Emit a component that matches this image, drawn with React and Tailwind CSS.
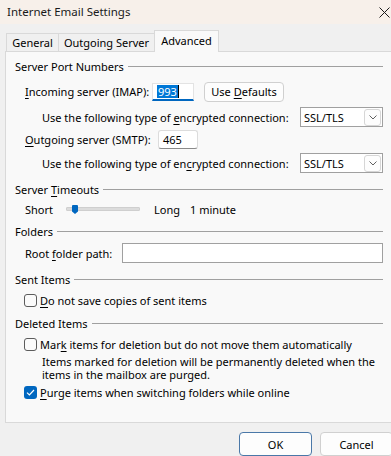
function U({ children }) {
  return <span className="underline decoration-1 underline-offset-[2px]">{children}</span>;
}

function GroupHeader({ children, className = '' }) {
  return (
    <div className={`flex items-center h-[16px] ${className}`}>
      <span>{children}</span>
      <div className="ml-[4px] mt-[1px] h-px flex-1 bg-[#a0a0a0]" />
    </div>
  );
}

function Checkbox({ checked }) {
  if (checked) {
    return (
      <div className="flex size-[13px] shrink-0 items-center justify-center rounded-[3px] bg-[#0067c0]">
        <svg width="9" height="7" viewBox="0 0 9 7" fill="none">
          <path d="M1 3.6 L3.4 6 L8 1" stroke="#fff" strokeWidth="1.2" />
        </svg>
      </div>
    );
  }
  return <div className="size-[13px] shrink-0 rounded-[3px] border border-[#5c5c5c] bg-[#fbfbfb]" />;
}

function Select({ value }) {
  return (
    <div className="flex h-[20px] w-[83px] shrink-0 items-center justify-between border border-[#a0a0a0] bg-white pl-[3px] pr-px">
      <span>{value}</span>
      <div className="flex h-[17px] w-[17px] items-center justify-center rounded-[3px] border border-[#d6d6d6] bg-[#fdfdfd]">
        <svg width="8" height="5" viewBox="0 0 8 5" fill="none">
          <path d="M0.5 0.5 L4 4 L7.5 0.5" stroke="#606060" strokeWidth="1" />
        </svg>
      </div>
    </div>
  );
}

export default function App() {
  return (
    <div className="flex h-[456px] w-[391px] flex-col overflow-hidden whitespace-nowrap bg-[#f0f0f0] font-['Noto_Sans',sans-serif] text-[11px] leading-none text-black">
      <div className="flex h-[24px] shrink-0 items-center justify-between bg-[#f7f0ea] pl-[7px] pr-px text-[#1a1a1a]">
        <span className="text-[11.5px]">Internet Email Settings</span>
        <svg width="11" height="11" viewBox="0 0 11 11" fill="none">
          <path d="M0.5 0.5 L10.5 10.5 M10.5 0.5 L0.5 10.5" stroke="#1a1a1a" strokeWidth="1" />
        </svg>
      </div>

      <div className="flex h-[27px] shrink-0 items-end pl-[6px]">
        <div className="flex h-[18px] w-[52px] items-center justify-center border-l border-t border-[#d9d9d9]">General</div>
        <div className="flex h-[18px] w-[96px] items-center justify-center border-l border-t border-[#d9d9d9]">Outgoing Server</div>
        <div className="relative z-10 -mb-px flex h-[22px] w-[65px] items-center justify-center border-x border-t border-[#d9d9d9] bg-[#f9f9f9] pb-[2px]">Advanced</div>
      </div>

      <div className="ml-[5px] flex h-[372px] shrink-0 flex-col border-y border-l border-[#d9d9d9] bg-[#f9f9f9] pl-[9px] pr-[8px]">
        <GroupHeader className="mt-[6px]">Server Port Numbers</GroupHeader>

        <div className="mt-[7px] flex h-[21px] items-center pl-[10px]">
          <span className="w-[127px]"><U>I</U>ncoming server (IMAP):</span>
          <div className="flex h-[18px] w-[42px] items-center border-x border-t border-b-2 border-[#e3e3e3] border-b-[#0067c0] bg-white pl-[4px]">
            <span className="bg-[#0078d7] px-px py-[1px] text-white">993</span>
            <span className="h-[13px] w-px bg-black" />
          </div>
          <div className="ml-[10px] flex h-[20px] w-[80px] items-center justify-center rounded-[4px] border border-[#d0d0d0] bg-[#fdfdfd]">
            Use <span className="ml-[3px]"><U>D</U>efaults</span>
          </div>
        </div>

        <div className="mt-[5px] flex h-[20px] items-center justify-between pl-[27px]">
          <span>Use the following type of <U>e</U>ncrypted connection:</span>
          <Select value="SSL/TLS" />
        </div>

        <div className="mt-[3px] flex h-[19px] items-center pl-[10px]">
          <span className="w-[133px]"><U>O</U>utgoing server (SMTP):</span>
          <div className="flex h-[19px] w-[40px] items-center rounded-[3px] border border-[#dcdcdc] border-b-[#8a8a8a] bg-white pl-[4px]">465</div>
        </div>

        <div className="mt-[4px] flex h-[20px] items-center justify-between pl-[27px]">
          <span>Use the following type of en<U>c</U>rypted connection:</span>
          <Select value="SSL/TLS" />
        </div>

        <GroupHeader className="mt-[8px]">Server <U>T</U>imeouts</GroupHeader>

        <div className="mt-[4px] flex h-[16px] items-center pl-[10px]">
          <span className="w-[41px]">Short</span>
          <div className="relative h-[4px] w-[74px] rounded-[1px] border border-[#cfcfcf] bg-[#dcdcdc]">
            <svg className="absolute -top-[3px] left-[5px]" width="6" height="9" viewBox="0 0 6 9">
              <path d="M0 1 Q0 0 1 0 L5 0 Q6 0 6 1 L6 6.5 L3 9 L0 6.5 Z" fill="#0067c0" />
            </svg>
          </div>
          <span className="ml-[14px] w-[36px]">Long</span>
          <span>1 minute</span>
        </div>

        <GroupHeader className="mt-[6px]">Folders</GroupHeader>

        <div className="mt-[4px] flex h-[20px] items-center pl-[10px]">
          <span className="w-[97px]">Root <U>f</U>older path:</span>
          <div className="h-[20px] flex-1 border border-[#a0a0a0] bg-white" />
        </div>

        <GroupHeader className="mt-[8px]">Sent Items</GroupHeader>

        <div className="mt-[5px] flex h-[16px] items-center gap-[3px] pl-[9px]">
          <Checkbox />
          <span><U>D</U>o not save copies of sent items</span>
        </div>

        <GroupHeader className="mt-[7px]">Deleted Items</GroupHeader>

        <div className="mt-[5px] flex h-[16px] items-center gap-[3px] pl-[9px]">
          <Checkbox />
          <span>Mar<U>k</U> items for deletion but do not move them automatically</span>
        </div>

        <div className="mt-[3px] pl-[27px] leading-[13px]">
          <div>Items marked for deletion will be permanently deleted when the</div>
          <div>items in the mailbox are purged.</div>
        </div>

        <div className="mt-[3px] flex h-[16px] items-center gap-[3px] pl-[9px]">
          <Checkbox checked />
          <span><U>P</U>urge items when switching folders while online</span>
        </div>
      </div>

      <div className="mt-[9px] flex gap-[8px] pl-[239px]">
        <div className="flex h-[24px] w-[73px] shrink-0 items-center justify-center rounded-[4px] border border-[#4a78a8] bg-[#fdfdfd]">OK</div>
        <div className="flex h-[24px] w-[73px] shrink-0 items-center justify-center rounded-[4px] border border-[#d0d0d0] bg-[#fdfdfd]">Cancel</div>
      </div>
    </div>
  );
}
